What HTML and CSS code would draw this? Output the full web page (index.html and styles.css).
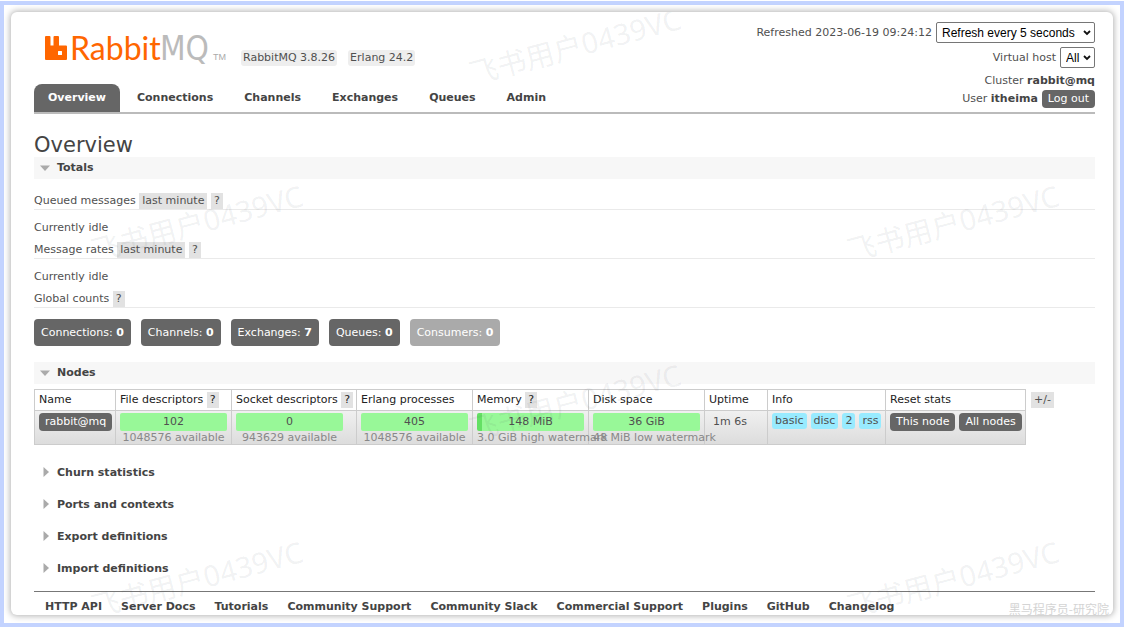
FILE: index.html
```html
<!DOCTYPE html>
<html lang="en">
<head>
<meta charset="utf-8">
<title>RabbitMQ Management</title>
<link rel="stylesheet" href="styles.css">
</head>
<body>
<div class="frame">
<div class="card">
  <header class="header">
    <div class="masthead">
      <div class="brand">
        <svg class="logo" width="186" height="36" viewBox="0 0 186 36" role="img" aria-label="RabbitMQ">
          <path fill="#f60" d="M1 2Q1 1 2 1H5.500Q6.500 1 6.500 2V10.500H9.500V2Q9.500 1 10.500 1H14Q15 1 15 2V10.500H22Q23 10.500 23 11.500V24Q23 25 22 25H2Q1 25 1 24ZM14 16.500V19.500Q14 20 14.500 20H17.500Q18 20 18 19.500V16.500Q18 16 17.500 16H14.500Q14 16 14 16.500Z"/>
          <text class="logo-rabbit" x="26" y="25">Rabbit</text>
          <text class="logo-mq" x="116" y="25">MQ</text>
          <text class="logo-tm" x="169" y="25">TM</text>
        </svg>
        <span class="version">RabbitMQ 3.8.26</span>
        <span class="version">Erlang 24.2</span>
      </div>
      <nav class="tabs">
        <a class="tab tab-active" href="#">Overview</a>
        <a class="tab" href="#">Connections</a>
        <a class="tab" href="#">Channels</a>
        <a class="tab" href="#">Exchanges</a>
        <a class="tab" href="#">Queues</a>
        <a class="tab" href="#">Admin</a>
      </nav>
    </div>
    <div class="status">
      <div class="status-row"><label for="refresh">Refreshed 2023-06-19 09:24:12</label>
        <span class="picker"><select id="refresh" class="select select-refresh"><option>Refresh every 5 seconds</option></select><svg class="chevron" width="8" height="6" viewBox="0 0 8 6"><path d="M1 1L4 4L7 1" fill="none" stroke="#111" stroke-width="1.800"/></svg></span></div>
      <div class="status-row"><label for="vhost">Virtual host</label>
        <span class="picker"><select id="vhost" class="select select-vhost"><option>All</option></select><svg class="chevron" width="8" height="6" viewBox="0 0 8 6"><path d="M1 1L4 4L7 1" fill="none" stroke="#111" stroke-width="1.800"/></svg></span></div>
      <div class="status-text"><span>Cluster <b>rabbit@mq</b></span></div>
      <div class="status-text"><span>User <b>itheima</b></span><button class="button" type="button">Log out</button></div>
    </div>
  </header>
  <main>
    <h1 class="title">Overview</h1>
    <h2 class="section section-open"><button class="toggle" type="button"><svg class="arrow" width="10" height="10" viewBox="0 0 10 10"><path d="M0 2.500H10L5 8Z" fill="#aaa"/></svg>Totals</button></h2>
    <div class="totals">
      <div class="rule-row">Queued messages <button class="hint" type="button">last minute</button> <button class="hint" type="button">?</button></div>
      <p class="idle">Currently idle</p>
      <div class="rule-row">Message rates <button class="hint" type="button">last minute</button> <button class="hint" type="button">?</button></div>
      <p class="idle">Currently idle</p>
      <div class="rule-row">Global counts <button class="hint" type="button">?</button></div>
      <div class="counts">
        <a class="count" href="#">Connections: <b>0</b></a>
        <a class="count" href="#">Channels: <b>0</b></a>
        <a class="count" href="#">Exchanges: <b>7</b></a>
        <a class="count" href="#">Queues: <b>0</b></a>
        <span class="count count-off">Consumers: <b>0</b></span>
      </div>
    </div>
    <h2 class="section section-open"><button class="toggle" type="button"><svg class="arrow" width="10" height="10" viewBox="0 0 10 10"><path d="M0 2.500H10L5 8Z" fill="#aaa"/></svg>Nodes</button></h2>
    <div class="nodes">
      <table class="table">
        <colgroup><col class="c-name"><col class="c-bar"><col class="c-wide"><col class="c-bar"><col class="c-bar"><col class="c-bar"><col class="c-up"><col class="c-info"><col class="c-reset"></colgroup>
        <thead><tr>
          <th>Name</th>
          <th>File descriptors <button class="hint" type="button">?</button></th>
          <th>Socket descriptors <button class="hint" type="button">?</button></th>
          <th>Erlang processes</th>
          <th>Memory <button class="hint" type="button">?</button></th>
          <th>Disk space</th><th>Uptime</th><th>Info</th><th>Reset stats</th>
        </tr></thead>
        <tbody><tr>
          <td><a class="button" href="#">rabbit@mq</a></td>
          <td><div class="meter">102</div><div class="limit">1048576 available</div></td>
          <td><div class="meter">0</div><div class="limit">943629 available</div></td>
          <td><div class="meter">405</div><div class="limit">1048576 available</div></td>
          <td><div class="meter meter-used">148 MiB</div><div class="limit limit-long">3.0 GiB high watermark</div></td>
          <td><div class="meter">36 GiB</div><div class="limit limit-long">48 MiB low watermark</div></td>
          <td class="uptime">1m 6s</td>
          <td><div class="chips"><span class="chip">basic</span><span class="chip">disc</span><span class="chip">2</span><span class="chip">rss</span></div></td>
          <td><div class="resets"><button class="button" type="button">This node</button><button class="button" type="button">All nodes</button></div></td>
        </tr></tbody>
      </table>
      <button class="hint columns" type="button">+/-</button>
    </div>
    <div class="closed">
      <h2 class="section"><button class="toggle" type="button"><svg class="arrow" width="10" height="12" viewBox="0 0 10 12"><path d="M3.500 0L9 5L3.500 10Z" fill="#aaa"/></svg>Churn statistics</button></h2>
      <h2 class="section"><button class="toggle" type="button"><svg class="arrow" width="10" height="12" viewBox="0 0 10 12"><path d="M3.500 0L9 5L3.500 10Z" fill="#aaa"/></svg>Ports and contexts</button></h2>
      <h2 class="section"><button class="toggle" type="button"><svg class="arrow" width="10" height="12" viewBox="0 0 10 12"><path d="M3.500 0L9 5L3.500 10Z" fill="#aaa"/></svg>Export definitions</button></h2>
      <h2 class="section"><button class="toggle" type="button"><svg class="arrow" width="10" height="12" viewBox="0 0 10 12"><path d="M3.500 0L9 5L3.500 10Z" fill="#aaa"/></svg>Import definitions</button></h2>
    </div>
  </main>
  <footer class="footer">
    <a href="#">HTTP API</a><a href="#">Server Docs</a><a href="#">Tutorials</a><a href="#">Community Support</a><a href="#">Community Slack</a><a href="#">Commercial Support</a><a href="#">Plugins</a><a href="#">GitHub</a><a href="#">Changelog</a>
  </footer>
  <div class="marks" aria-hidden="true">
    <span class="mark m1">飞书用户0439VC</span>
    <span class="mark m2">飞书用户0439VC</span>
    <span class="mark m3">飞书用户0439VC</span>
    <span class="mark m4">飞书用户0439VC</span>
    <span class="mark m5">飞书用户0439VC</span>
    <span class="mark m6">飞书用户0439VC</span>
    <span class="credit">黑马程序员-研究院</span>
  </div>
</div>
</div>
</body>
</html>
```
FILE: styles.css
```css
* { box-sizing: border-box; }
body {
  margin: 1px 0 0;
  background: #fff;
  color: #505050;
  font: 11px/16px "DejaVu Sans", Verdana, sans-serif;
}
b { color: #444; }
a { color: inherit; text-decoration: none; }
button { font: inherit; color: inherit; border: 0; margin: 0; cursor: pointer; }

.frame {
  min-height: calc(100vh - 1px);
  padding: 7px 7px 8px;
  border: 4px solid #c3d3ff;
}
.card {
  position: relative;
  padding: 10px 18px 0 23px;
  border-radius: 6px;
  background: #fff;
  box-shadow: 0 0 6px 1px rgba(0, 0, 0, 0.3);
}

.header {
  display: flex;
  justify-content: space-between;
  border-bottom: 2px solid #bbb;
}
.masthead { display: flex; flex-direction: column; justify-content: space-between; }
.brand { display: flex; align-items: flex-start; gap: 11px; padding: 13px 0 0 10px; }
.logo { flex: none; overflow: visible; }
.logo-rabbit { font: 32px Lato, sans-serif; fill: #f60; }
.logo-mq { font: 33px "Liberation Sans Narrow", "DejaVu Sans Condensed", Lato, sans-serif; fill: #bbb; }
.logo-tm { font: 9px "Liberation Sans", sans-serif; fill: #aaa; }
.version {
  margin-top: 15px;
  padding: 0 2px;
  border-radius: 3px;
  background: #eee;
}
.status { display: flex; flex-direction: column; align-items: flex-end; padding-bottom: 4px; }
.status-row { display: flex; align-items: center; gap: 4px; padding-bottom: 4px; }
.status-text { display: flex; align-items: center; gap: 4px; min-height: 18px; line-height: 14px; align-items: center; }
.picker { position: relative; display: flex; }
.chevron { position: absolute; right: 4px; top: 8px; pointer-events: none; }
.select {
  appearance: none;
  height: 21px;
  padding: 0 5px;
  border: 1px solid #767676;
  border-radius: 2px;
  background: #fff;
  color: #000;
  font: 12px "Liberation Sans", Arial, sans-serif;
}
.select-refresh { width: 159px; }
.select-vhost { width: 35px; }
.button {
  display: inline-block;
  padding: 1px 6px;
  border-radius: 4px;
  background: #666;
  color: #fff;
  line-height: 16px;
  white-space: nowrap;
}

.tabs { display: flex; gap: 3px; }
.tab {
  padding: 6px 14px;
  border-radius: 8px 8px 0 0;
  font-weight: bold;
  color: #444;
}
.tab-active { background: #666; color: #fff; }

.title { margin: 19px 0 0; font-size: 21px; font-weight: normal; line-height: 24px; color: #444; }
.section { margin: 0; font-size: 11px; line-height: 22px; color: #444; }
.section-open { background: #f7f7f7; }
.toggle {
  display: flex;
  align-items: center;
  gap: 7px;
  padding: 0 6px;
  background: none;
  font-weight: bold;
}
.totals { padding: 14px 0 16px; }
.rule-row { height: 17px; border-bottom: 1px solid #eaeaea; white-space: nowrap; }
.hint { height: 16px; padding: 0 3px; background: #e2e2e2; line-height: 16px; vertical-align: top; }
.idle { margin: 0; padding: 10px 0 6px; }
.counts { display: flex; gap: 10px; padding-top: 11px; }
.count { padding: 6px 7px 5px; border-radius: 4px; background: #666; color: #fff; }
.count b { color: inherit; }
.count-off { background: #aaa; }

.nodes { display: flex; align-items: flex-start; gap: 5px; padding-top: 5px; }
.table { width: 991px; table-layout: fixed; border-collapse: collapse; }
.c-name { width: 81px; }
.c-bar { width: 116px; }
.c-wide { width: 125px; }
.c-up { width: 63px; }
.c-info { width: 118px; }
.c-reset { width: 140px; }
.table th, .table td {
  padding: 2px 4px;
  border: 1px solid #ccc;
  text-align: left;
  vertical-align: top;
  white-space: nowrap;
}
.table th { color: #222; font-weight: normal; line-height: 16px; }
.table tbody tr { background: linear-gradient(#f0f0f0, #dcdcdc); }
.table td { padding: 2px 4px 0; }
.meter {
  width: 107px;
  border-radius: 2px;
  background: #98f898;
  line-height: 18px;
  text-align: center;
}
.meter-used { background: linear-gradient(90deg, #64e064 5px, #98f898 5px); }
.limit { width: 107px; color: #888; line-height: 13px; text-align: center; }
.limit-long { text-align: left; }
.table .uptime { padding-left: 8px; line-height: 18px; }
.chips, .resets { display: flex; gap: 4px; }
.chip { padding: 0 3px; border-radius: 3px; background: #98ebff; }
.columns { margin-top: 3px; }

.closed { display: flex; flex-direction: column; gap: 10px; padding: 17px 0 11px; }
.footer {
  display: flex;
  gap: 19px;
  padding: 7px 11px 0;
  border-top: 1px solid #777;
  color: #444;
  font-weight: bold;
  white-space: nowrap;
}

/* Watermark overlay */
.marks { position: absolute; inset: 0; overflow: hidden; pointer-events: none; }
.mark {
  position: absolute;
  color: rgba(60, 70, 80, 0.08);
  font: 29px/36px "Noto Sans", "Noto Sans CJK SC", sans-serif;
  white-space: nowrap;
  transform: rotate(-15deg);
}
.m1 { left: 455px; top: 16px; }
.m2 { left: 77px; top: 193px; }
.m3 { left: 833px; top: 193px; }
.m4 { left: 455px; top: 372px; }
.m5 { left: 77px; top: 549px; }
.m6 { left: 833px; top: 549px; }
.credit {
  position: absolute;
  right: 4px;
  bottom: 0;
  color: #d4d4d4;
  font: 12px/12px "Noto Sans CJK SC", sans-serif;
}
```
